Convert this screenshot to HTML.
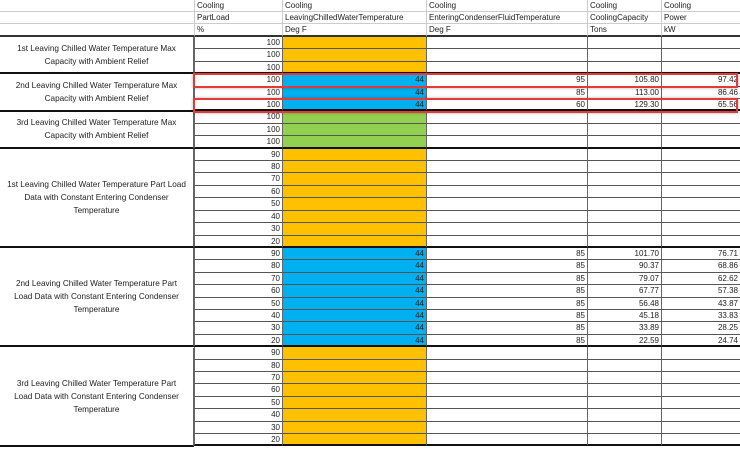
<!DOCTYPE html>
<html><head><style>
body{margin:0;width:740px;height:449px;overflow:hidden;background:#fff;font-family:"Liberation Sans",Arial,sans-serif;font-size:8px;color:#222;position:relative}
.r{display:flex;height:12.42px}
.h{height:12px}
.c{box-sizing:border-box;border-right:1px solid #666;border-bottom:1px solid #555;text-align:right;padding-right:2px;line-height:11px;white-space:nowrap;overflow:hidden}
.h .c{border-right:1px solid #ccc;border-bottom:1px solid #ccc;text-align:left;padding-left:2px}
.h.l .c{border-bottom:2px solid #333}
.c:nth-child(1){width:195px}.c:nth-child(2){width:88px}.c:nth-child(3){width:144px}.c:nth-child(4){width:161px}.c:nth-child(5){width:74px}.c:nth-child(6){width:78px;border-right:none}
.o .c:nth-child(3){background:#FFC000}
.b .c:nth-child(3){background:#00B0F0}
.g .c:nth-child(3){background:#92D050}
.e .c{border-bottom:2px solid #111}
.lab{position:absolute;left:0;width:194px;background:#fff;border-right:1px solid #666;border-bottom:2px solid #111;box-sizing:border-box;display:flex;align-items:center;justify-content:center;text-align:center;line-height:13px;font-size:8.2px;color:#222;padding:0 2px;white-space:nowrap}
.red{position:absolute;left:193px;width:545px;height:15px;border:2px solid #e53935;box-sizing:border-box;box-shadow:0 0 3px rgba(0,0,0,.3)}
</style></head><body>
<div class="r h"><div class="c"></div><div class="c">Cooling</div><div class="c">Cooling</div><div class="c">Cooling</div><div class="c">Cooling</div><div class="c">Cooling</div></div>
<div class="r h"><div class="c"></div><div class="c">PartLoad</div><div class="c">LeavingChilledWaterTemperature</div><div class="c">EnteringCondenserFluidTemperature</div><div class="c">CoolingCapacity</div><div class="c">Power</div></div>
<div class="r h l" style="height:13px"><div class="c"></div><div class="c">%</div><div class="c">Deg F</div><div class="c">Deg F</div><div class="c">Tons</div><div class="c">kW</div></div>

<div class="r o"><div class="c"></div><div class="c">100</div><div class="c"></div><div class="c"></div><div class="c"></div><div class="c"></div></div>
<div class="r o"><div class="c"></div><div class="c">100</div><div class="c"></div><div class="c"></div><div class="c"></div><div class="c"></div></div>
<div class="r o e"><div class="c"></div><div class="c">100</div><div class="c"></div><div class="c"></div><div class="c"></div><div class="c"></div></div>

<div class="r b"><div class="c"></div><div class="c">100</div><div class="c">44</div><div class="c">95</div><div class="c">105.80</div><div class="c">97.42</div></div>
<div class="r b"><div class="c"></div><div class="c">100</div><div class="c">44</div><div class="c">85</div><div class="c">113.00</div><div class="c">86.46</div></div>
<div class="r b e"><div class="c"></div><div class="c">100</div><div class="c">44</div><div class="c">60</div><div class="c">129.30</div><div class="c">65.56</div></div>

<div class="r g"><div class="c"></div><div class="c">100</div><div class="c"></div><div class="c"></div><div class="c"></div><div class="c"></div></div>
<div class="r g"><div class="c"></div><div class="c">100</div><div class="c"></div><div class="c"></div><div class="c"></div><div class="c"></div></div>
<div class="r g e"><div class="c"></div><div class="c">100</div><div class="c"></div><div class="c"></div><div class="c"></div><div class="c"></div></div>

<div class="r o"><div class="c"></div><div class="c">90</div><div class="c"></div><div class="c"></div><div class="c"></div><div class="c"></div></div>
<div class="r o"><div class="c"></div><div class="c">80</div><div class="c"></div><div class="c"></div><div class="c"></div><div class="c"></div></div>
<div class="r o"><div class="c"></div><div class="c">70</div><div class="c"></div><div class="c"></div><div class="c"></div><div class="c"></div></div>
<div class="r o"><div class="c"></div><div class="c">60</div><div class="c"></div><div class="c"></div><div class="c"></div><div class="c"></div></div>
<div class="r o"><div class="c"></div><div class="c">50</div><div class="c"></div><div class="c"></div><div class="c"></div><div class="c"></div></div>
<div class="r o"><div class="c"></div><div class="c">40</div><div class="c"></div><div class="c"></div><div class="c"></div><div class="c"></div></div>
<div class="r o"><div class="c"></div><div class="c">30</div><div class="c"></div><div class="c"></div><div class="c"></div><div class="c"></div></div>
<div class="r o e"><div class="c"></div><div class="c">20</div><div class="c"></div><div class="c"></div><div class="c"></div><div class="c"></div></div>

<div class="r b"><div class="c"></div><div class="c">90</div><div class="c">44</div><div class="c">85</div><div class="c">101.70</div><div class="c">76.71</div></div>
<div class="r b"><div class="c"></div><div class="c">80</div><div class="c">44</div><div class="c">85</div><div class="c">90.37</div><div class="c">68.86</div></div>
<div class="r b"><div class="c"></div><div class="c">70</div><div class="c">44</div><div class="c">85</div><div class="c">79.07</div><div class="c">62.62</div></div>
<div class="r b"><div class="c"></div><div class="c">60</div><div class="c">44</div><div class="c">85</div><div class="c">67.77</div><div class="c">57.38</div></div>
<div class="r b"><div class="c"></div><div class="c">50</div><div class="c">44</div><div class="c">85</div><div class="c">56.48</div><div class="c">43.87</div></div>
<div class="r b"><div class="c"></div><div class="c">40</div><div class="c">44</div><div class="c">85</div><div class="c">45.18</div><div class="c">33.83</div></div>
<div class="r b"><div class="c"></div><div class="c">30</div><div class="c">44</div><div class="c">85</div><div class="c">33.89</div><div class="c">28.25</div></div>
<div class="r b e"><div class="c"></div><div class="c">20</div><div class="c">44</div><div class="c">85</div><div class="c">22.59</div><div class="c">24.74</div></div>

<div class="r o"><div class="c"></div><div class="c">90</div><div class="c"></div><div class="c"></div><div class="c"></div><div class="c"></div></div>
<div class="r o"><div class="c"></div><div class="c">80</div><div class="c"></div><div class="c"></div><div class="c"></div><div class="c"></div></div>
<div class="r o"><div class="c"></div><div class="c">70</div><div class="c"></div><div class="c"></div><div class="c"></div><div class="c"></div></div>
<div class="r o"><div class="c"></div><div class="c">60</div><div class="c"></div><div class="c"></div><div class="c"></div><div class="c"></div></div>
<div class="r o"><div class="c"></div><div class="c">50</div><div class="c"></div><div class="c"></div><div class="c"></div><div class="c"></div></div>
<div class="r o"><div class="c"></div><div class="c">40</div><div class="c"></div><div class="c"></div><div class="c"></div><div class="c"></div></div>
<div class="r o"><div class="c"></div><div class="c">30</div><div class="c"></div><div class="c"></div><div class="c"></div><div class="c"></div></div>
<div class="r o e"><div class="c"></div><div class="c">20</div><div class="c"></div><div class="c"></div><div class="c"></div><div class="c"></div></div>

<div class="lab" style="top:37px;height:37.3px">1st Leaving Chilled Water Temperature Max<br>Capacity with Ambient Relief</div>
<div class="lab" style="top:74.3px;height:37.3px">2nd Leaving Chilled Water Temperature Max<br>Capacity with Ambient Relief</div>
<div class="lab" style="top:111.5px;height:37.3px">3rd Leaving Chilled Water Temperature Max<br>Capacity with Ambient Relief</div>
<div class="lab" style="top:148.8px;height:99.4px">1st Leaving Chilled Water Temperature Part Load<br>Data with Constant Entering Condenser<br>Temperature</div>
<div class="lab" style="top:248.1px;height:99.4px">2nd Leaving Chilled Water Temperature Part<br>Load Data with Constant Entering Condenser<br>Temperature</div>
<div class="lab" style="top:347.5px;height:99.4px">3rd Leaving Chilled Water Temperature Part<br>Load Data with Constant Entering Condenser<br>Temperature</div>

<div class="red" style="top:73px"></div>
<div class="red" style="top:98px"></div>
</body></html>
